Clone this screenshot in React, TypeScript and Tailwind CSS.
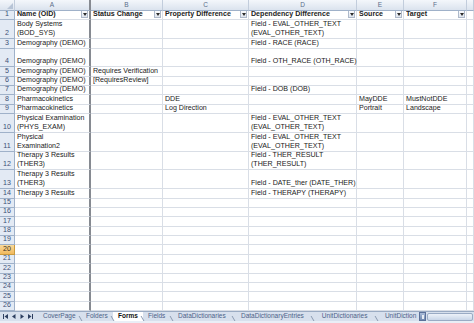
import React from "react";

const widths = [15, 76, 72, 86, 108, 47, 63, 7];
const letters = ["", "A", "B", "C", "D", "E", "F", ""];

type RowData = { n: number; dbl?: boolean; c: string[] };

const rows: RowData[] = [
  { n: 2, dbl: true, c: ["Body Systems\n(BOD_SYS)", "", "", "Field - EVAL_OTHER_TEXT\n(EVAL_OTHER_TEXT)", "", ""] },
  { n: 3, c: ["Demography (DEMO)", "", "", "Field - RACE (RACE)", "", ""] },
  { n: 4, dbl: true, c: ["Demography (DEMO)", "", "", "Field - OTH_RACE (OTH_RACE)", "", ""] },
  { n: 5, c: ["Demography (DEMO)", "Requires Verification", "", "", "", ""] },
  { n: 6, c: ["Demography (DEMO)", "[RequiresReview]", "", "", "", ""] },
  { n: 7, c: ["Demography (DEMO)", "", "", "Field - DOB (DOB)", "", ""] },
  { n: 8, c: ["Pharmacokinetics", "", "DDE", "", "MayDDE", "MustNotDDE"] },
  { n: 9, c: ["Pharmacokinetics", "", "Log Direction", "", "Portrait", "Landscape"] },
  { n: 10, dbl: true, c: ["Physical Examination\n(PHYS_EXAM)", "", "", "Field - EVAL_OTHER_TEXT\n(EVAL_OTHER_TEXT)", "", ""] },
  { n: 11, dbl: true, c: ["Physical\nExamination2", "", "", "Field - EVAL_OTHER_TEXT\n(EVAL_OTHER_TEXT)", "", ""] },
  { n: 12, dbl: true, c: ["Therapy 3 Results\n(THER3)", "", "", "Field - THER_RESULT\n(THER_RESULT)", "", ""] },
  { n: 13, dbl: true, c: ["Therapy 3 Results\n(THER3)", "", "", "Field - DATE_ther (DATE_THER)", "", ""] },
  { n: 14, c: ["Therapy 3 Results", "", "", "Field - THERAPY (THERAPY)", "", ""] },
];
for (let i = 15; i <= 26; i++) rows.push({ n: i, c: ["", "", "", "", "", ""] });

const headers = ["Name (OID)", "Status Change", "Property Difference", "Dependency Difference", "Source", "Target"];

// sheet tabs and the gap that follows each one
const tabs = [
  { t: "CoverPage", gap: "w-[10.5px]" },
  { t: "Folders", gap: "w-[10.3px]" },
  { t: "Forms", gap: "w-[10.1px]" },
  { t: "Fields", gap: "w-[12.7px]" },
  { t: "DataDictionaries", gap: "w-[15.3px]" },
  { t: "DataDictionaryEntries", gap: "w-[18px]" },
  { t: "UnitDictionaries", gap: "w-[17.5px]" },
  { t: "UnitDiction", gap: "w-0" },
];

function FilterBtn() {
  return (
    <span className="w-[7px] h-[8px] mb-[1px] mr-[1px] shrink-0 flex items-center justify-center border border-[#aeb9ca] bg-gradient-to-b from-[#fbfcfe] to-[#dfe5ee]">
      <svg width="4" height="3" viewBox="0 0 4 3">
        <path d="M0 0H4L2 3Z" fill="#2b2b2b" />
      </svg>
    </span>
  );
}

function Cell({ i, children, h }: { i: number; children?: React.ReactNode; h: string }) {
  const thick = i === 1;
  return (
    <div
      style={{ width: widths[i] }}
      className={`${h} shrink-0 box-border border-b border-[#d9dee6] ${thick ? "border-r-2 border-r-[#868a91]" : "border-r border-r-[#d9dee6]"} flex items-end pl-[2px] leading-[9px] whitespace-pre text-[#222]`}
    >
      {children}
    </div>
  );
}

function Arrow({ dir, bar }: { dir: "l" | "r"; bar?: boolean }) {
  return (
    <svg width="6" height="5" viewBox="0 0 6 5">
      {dir === "l" ? (
        <>
          {bar && <rect x="0" y="0" width="1" height="5" fill="#2d3f60" />}
          <path d={bar ? "M5 0V5L1.5 2.5Z" : "M4.5 0V5L1 2.5Z"} fill="#2d3f60" />
        </>
      ) : (
        <>
          {bar && <rect x="5" y="0" width="1" height="5" fill="#2d3f60" />}
          <path d={bar ? "M1 0V5L4.5 2.5Z" : "M1.5 0V5L5 2.5Z"} fill="#2d3f60" />
        </>
      )}
    </svg>
  );
}

export default function App() {
  return (
    <div
      className="w-[474px] h-[323px] overflow-hidden bg-white text-[7.1px]"
      style={{ fontFamily: '"Liberation Sans", Arial, sans-serif' }}
    >
      {/* column letters */}
      <div className="flex h-[11px]">
        {letters.map((l, i) => (
          <div
            key={i}
            style={{ width: widths[i] }}
            className={`shrink-0 box-border border-b border-[#9fb1c9] bg-gradient-to-b from-[#f4f7fb] to-[#dbe3ee] ${i === 1 ? "border-r-2 border-r-[#868a91]" : "border-r border-r-[#c2cddc]"} flex items-center justify-center text-[6.5px] text-[#5b6d8a] relative`}
          >
            {i === 0 ? (
              <svg width="6" height="6" viewBox="0 0 6 6" className="absolute right-[1px] bottom-[1px]">
                <path d="M6 0V6H0Z" fill="#b7c4d6" />
              </svg>
            ) : (
              l
            )}
          </div>
        ))}
      </div>

      {/* header row 1 */}
      <div className="flex h-[9.4px]">
        <div style={{ width: widths[0] }} className="shrink-0 box-border h-full border-b border-r border-[#9fb1c9] bg-[#e3eaf4] flex items-end justify-center leading-[9px] text-[#3c5076]">
          1
        </div>
        {headers.map((t, j) => (
          <Cell key={j} i={j + 1} h="h-full">
            <span className="font-bold flex-1 overflow-hidden">{t}</span>
            <FilterBtn />
          </Cell>
        ))}
        <Cell i={7} h="h-full" />
      </div>

      {rows.map((r) => {
        const h = r.dbl ? "h-[18.75px]" : "h-[9.375px]";
        const sel = r.n === 20;
        return (
          <div key={r.n} className={`flex ${h}`}>
            <div
              style={{ width: widths[0] }}
              className={`shrink-0 box-border h-full border-b border-r flex items-end justify-center leading-[9px] ${sel ? "bg-gradient-to-b from-[#f9d99b] to-[#f1b95c] border-[#c99a3f] text-[#3b3221]" : "bg-[#e3eaf4] border-[#9fb1c9] text-[#3c5076]"}`}
            >
              {r.n}
            </div>
            {r.c.map((t, j) => (
              <Cell key={j} i={j + 1} h="h-full">
                {t}
              </Cell>
            ))}
            <Cell i={7} h="h-full" />
          </div>
        );
      })}

      {/* sheet tabs */}
      <div className="flex h-[10px] items-stretch bg-[#d7e0ed] border-t border-[#9aabc3] text-[6.5px]">
        <div className="w-[38px] shrink-0 flex items-center gap-[2px] pl-[3px]">
          <Arrow dir="l" bar />
          <Arrow dir="l" />
          <Arrow dir="r" />
          <Arrow dir="r" bar />
        </div>
        <div className="flex items-stretch overflow-hidden w-[381px] shrink-0 pl-[5px]">
          {tabs.map(({ t, gap }) => {
            const active = t === "Forms";
            return (
              <div key={t} className="flex items-stretch shrink-0">
                <div
                  className={`flex items-center leading-none ${active ? "bg-white font-bold text-[#111] -mx-[5px] px-[5px]" : "text-[#4d6288]"}`}
                >
                  {t}
                </div>
                <div className={`${gap} shrink-0 flex justify-center`}>
                  <span className="w-[1px] self-end h-[5px] bg-[#8c9bb2] skew-x-[30deg]" />
                </div>
              </div>
            );
          })}
        </div>
        <div className="w-[7px] shrink-0 bg-gradient-to-b from-[#a9bcd8] to-[#6f88b0] border border-[#5b7099] flex items-center justify-center">
          <span className="w-[2px] h-[4px] bg-white/80" />
        </div>
        <div className="flex-1 flex items-center px-[1px]">
          <div className="w-full h-[8px] rounded-[2px] border border-[#9aabc4] bg-gradient-to-b from-[#edf2f9] to-[#c9d6e8]" />
        </div>
      </div>
      <div className="h-[2px] bg-[#e9eef6]" />
    </div>
  );
}
